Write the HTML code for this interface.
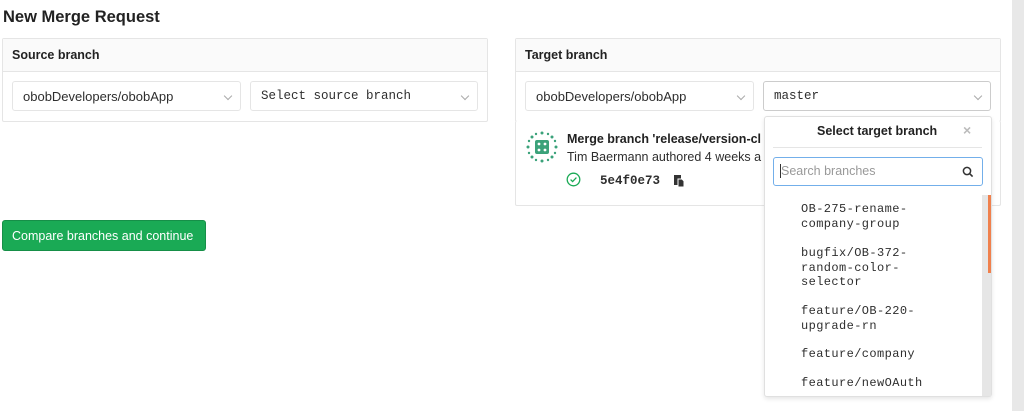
<!DOCTYPE html>
<html><head><style>
*{box-sizing:border-box;margin:0;padding:0}
body{width:1024px;height:411px;background:#fff;font-family:"Liberation Sans",sans-serif;font-size:13px;color:#2e2e2e;position:relative;overflow:hidden}
.abs{position:absolute}
h1{position:absolute;left:3px;top:8px;font-size:16.5px;font-weight:bold;color:#222}
.panel{position:absolute;border:1px solid #e5e5e5;border-radius:2px;background:#fff}
.ph{height:33px;background:#fafafa;border-bottom:1px solid #e5e5e5;font-weight:bold;font-size:12.5px;padding:9px 9px;color:#222}
.sel{position:absolute;height:30px;border:1px solid #e5e5e5;border-radius:3px;background:#fff;padding:7px 10px;font-size:13px}
.sel.mono{font-family:"Liberation Mono",monospace;font-size:12.5px}
.chev{position:absolute;right:9px;top:11px;width:6px;height:6px;border-right:1px solid #aaa;border-bottom:1px solid #aaa;transform:rotate(45deg)}
.mono{font-family:"Liberation Mono",monospace}
.item{position:absolute;left:801px;font-family:"Liberation Mono",monospace;font-size:12px;line-height:14.5px;color:#2e2e2e;letter-spacing:.4px;white-space:nowrap}
</style></head><body>
<h1>New Merge Request</h1>
<div class="panel" style="left:2px;top:38px;width:486px;height:84px"><div class="ph">Source branch</div></div>
<div class="sel" style="left:12px;top:81px;width:229px">obobDevelopers/obobApp<span class="chev"></span></div>
<div class="sel mono" style="left:250px;top:81px;width:228px">Select source branch<span class="chev"></span></div>

<div class="panel" style="left:515px;top:38px;width:486px;height:84px"><div class="ph">Target branch</div></div>
<div class="sel" style="left:525px;top:81px;width:229px">obobDevelopers/obobApp<span class="chev"></span></div>
<div class="sel mono" style="left:763px;top:81px;width:228px;border-color:#ccc">master<span class="chev"></span></div>

<div class="panel" style="left:515px;top:121px;width:486px;height:85px;border-top:none"></div>
<svg class="abs" style="left:526px;top:131px" width="32" height="32" viewBox="0 0 32 32">
<g fill="#3ba27a"><rect x="9" y="9" width="14" height="14" rx="2"/>
<circle cx="16" cy="2" r="1.5"/><circle cx="16" cy="30" r="1.5"/><circle cx="2" cy="16" r="1.5"/><circle cx="30" cy="16" r="1.5"/>
<circle cx="6" cy="6" r="1.5"/><circle cx="26" cy="6" r="1.5"/><circle cx="6" cy="26" r="1.5"/><circle cx="26" cy="26" r="1.5"/>
<circle cx="10" cy="3" r="1.2"/><circle cx="22" cy="3" r="1.2"/><circle cx="3" cy="10" r="1.2"/><circle cx="29" cy="10" r="1.2"/>
<circle cx="3" cy="22" r="1.2"/><circle cx="29" cy="22" r="1.2"/><circle cx="10" cy="29" r="1.2"/><circle cx="22" cy="29" r="1.2"/></g>
<g fill="#fff"><circle cx="13" cy="13" r="1.4"/><circle cx="19" cy="13" r="1.4"/><circle cx="13" cy="19" r="1.4"/><circle cx="19" cy="19" r="1.4"/></g></svg>
<div class="abs" style="left:567px;top:132px;font-weight:bold;font-size:12.5px;color:#222;white-space:nowrap">Merge branch 'release/version-cl</div>
<div class="abs" style="left:567px;top:150px;font-size:12.5px;white-space:nowrap">Tim Baermann authored 4 weeks a</div>
<svg class="abs" style="left:566px;top:172px" width="15" height="15" viewBox="0 0 15 15"><circle cx="7.5" cy="7.5" r="6.3" fill="none" stroke="#1aaa55" stroke-width="1.3"/><path d="M4.6 7.6l2 2 3.8-4" fill="none" stroke="#1aaa55" stroke-width="1.3"/></svg>
<div class="abs mono" style="left:600px;top:174px;font-weight:bold;font-size:12.5px">5e4f0e73</div>
<svg class="abs" style="left:672px;top:174px" width="14" height="14" viewBox="0 0 14 14"><rect x="2" y="1" width="7" height="10" fill="#333"/><path d="M6 5h4l2 2v6H6z" fill="#333" stroke="#fff" stroke-width="1"/></svg>

<div class="abs" style="left:2px;top:220px;width:204px;height:31px;background:#1aaa55;border:1px solid #168f48;border-radius:3px;color:#fff;font-size:12.5px;padding:8px 9px;white-space:nowrap">Compare branches and continue</div>

<div class="abs" style="left:1012px;top:0;width:12px;height:411px;background:#e8e8e8"></div>

<div class="abs" style="left:764px;top:116px;width:228px;height:281px;background:#fff;border:1px solid #e0e0e0;border-radius:3px;box-shadow:0 2px 4px rgba(0,0,0,.1)"></div>
<div class="abs" style="left:817px;top:124px;font-weight:bold;font-size:12.5px;color:#222">Select target branch</div>
<div class="abs" style="left:963px;top:122px;color:#bbb;font-size:14px;font-weight:bold">×</div>
<div class="abs" style="left:773px;top:147px;width:209px;height:1px;background:#e5e5e5"></div>
<div class="abs" style="left:773px;top:157px;width:210px;height:29px;border:1px solid #73afea;border-radius:3px;padding:6px 6px;font-size:12.5px;color:#999"><span style="border-left:1px solid #333"></span>Search branches
<svg style="position:absolute;right:8px;top:8px" width="12" height="12" viewBox="0 0 12 12"><circle cx="5" cy="5" r="3.6" fill="none" stroke="#333" stroke-width="1.5"/><path d="M7.6 7.6l3 3" stroke="#333" stroke-width="1.6"/></svg></div>
<div class="abs" style="left:982px;top:195px;width:9px;height:201px;background:#e6e6e6"></div>
<div class="abs" style="left:988px;top:195px;width:3px;height:78px;background:#f0804c"></div>
<div class="item" style="top:202px">OB-275-rename-<br>company-group</div>
<div class="item" style="top:246px">bugfix/OB-372-<br>random-color-<br>selector</div>
<div class="item" style="top:304px">feature/OB-220-<br>upgrade-rn</div>
<div class="item" style="top:347px">feature/company</div>
<div class="item" style="top:376px">feature/newOAuth</div>
</body></html>
